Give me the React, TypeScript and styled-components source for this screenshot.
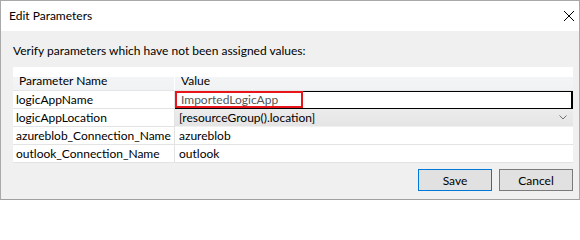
import React from "react";
import styled, { createGlobalStyle } from "styled-components";

const Global = createGlobalStyle`
  html, body { margin: 0; padding: 0; background: #ffffff; }
  body { font-family: Lato, "Noto Sans", sans-serif; font-size: 12px; color: #000; }
  * { box-sizing: border-box; }
`;

const Window = styled.div`
  width: 580px;
  height: 200px;
  border: 1px solid #a9a9a9;
  border-bottom-color: #a0a0a0;
  display: flex;
  flex-direction: column;
  background: #f0f0f0;
  overflow: hidden;
`;

const TitleBar = styled.div`
  height: 30px;
  background: #ffffff;
  display: flex;
  align-items: center;
  justify-content: space-between;
  padding: 0 3px 0 8px;
  flex-shrink: 0;
`;

const Title = styled.span`
  line-height: 16px;
`;

const CloseButton = styled.div`
  width: 12px;
  height: 12px;
  margin-right: 1px;
  display: flex;
`;

const Body = styled.div`
  flex: 1;
  display: flex;
  flex-direction: column;
  padding: 12px 5px 0 12px;
`;

const Prompt = styled.div`
  line-height: 16px;
  height: 24px;
`;

const Table = styled.div`
  width: 560px;
  background: #ffffff;
  display: grid;
  grid-template-columns: 162px 1fr;
`;

const HeaderCell = styled.div<{ $last?: boolean }>`
  height: 24px;
  padding: 6px 0 0 ${(p) => (p.$last ? 6 : 6)}px;
  line-height: 16px;
  background: linear-gradient(#ffffff 0, #ffffff 10px, #f3f4f6 10px, #f1f2f4 100%);
  border-right: ${(p) => (p.$last ? "none" : "1px solid #ffffff")};
  border-bottom: 1px solid #e5e5e5;
`;

const Cell = styled.div<{ $value?: boolean }>`
  height: 18px;
  line-height: 17px;
  padding-left: ${(p) => (p.$value ? 4 : 3)}px;
  border-right: ${(p) => (p.$value ? "none" : "1px solid #e3e3e3")};
  border-bottom: 1px solid #e3e3e3;
  white-space: nowrap;
  overflow: hidden;
`;

const EditCell = styled.div`
  height: 18px;
  position: relative;
  border: 1px solid #000000;
  border-right-width: 2px;
  line-height: 16px;
  padding-left: 5px;
  color: #555555;
  background: #ffffff;
`;

const Highlight = styled.div`
  position: absolute;
  left: -1px;
  top: -1px;
  width: 128px;
  height: 17px;
  border: 2px solid #e8161a;
  pointer-events: none;
`;

const ComboCell = styled.div`
  height: 18px;
  display: flex;
  align-items: center;
  justify-content: space-between;
  padding: 0 6px 0 4px;
  background: linear-gradient(#ececec, #e5e5e5);
  border-bottom: 1px solid #f0f0f0;
  line-height: 17px;
`;

const ButtonRow = styled.div`
  display: flex;
  justify-content: flex-end;
  gap: 7px;
  margin-top: 6px;
  padding-right: 1px;
`;

const Button = styled.button<{ $default?: boolean }>`
  width: 74px;
  height: 22px;
  font-family: inherit;
  font-size: 12px;
  background: #e1e1e1;
  border: 1px solid ${(p) => (p.$default ? "#0078d7" : "#7a7a7a")};
  padding: 0;
  color: #000;
`;

const rows = [
  { name: "azureblob_Connection_Name", value: "azureblob" },
  { name: "outlook_Connection_Name", value: "outlook" },
];

export default function App() {
  return (
    <>
      <Global />
      <Window>
        <TitleBar>
          <Title>Edit Parameters</Title>
          <CloseButton>
            <svg width="12" height="12" viewBox="0 0 12 12">
              <path d="M1 1 L11 11 M11 1 L1 11" stroke="#000" strokeWidth="1" fill="none" />
            </svg>
          </CloseButton>
        </TitleBar>
        <Body>
          <Prompt>Verify parameters which have not been assigned values:</Prompt>
          <Table>
            <HeaderCell>Parameter Name</HeaderCell>
            <HeaderCell $last>Value</HeaderCell>
            <Cell>logicAppName</Cell>
            <EditCell>
              ImportedLogicApp
              <Highlight />
            </EditCell>
            <Cell>logicAppLocation</Cell>
            <ComboCell>
              <span>[resourceGroup().location]</span>
              <svg width="8" height="5" viewBox="0 0 8 5">
                <path d="M0.5 0.5 L4 4 L7.5 0.5" stroke="#707070" strokeWidth="1" fill="none" />
              </svg>
            </ComboCell>
            {rows.map((r) => (
              <React.Fragment key={r.name}>
                <Cell>{r.name}</Cell>
                <Cell $value>{r.value}</Cell>
              </React.Fragment>
            ))}
          </Table>
          <ButtonRow>
            <Button $default>Save</Button>
            <Button>Cancel</Button>
          </ButtonRow>
        </Body>
      </Window>
    </>
  );
}
